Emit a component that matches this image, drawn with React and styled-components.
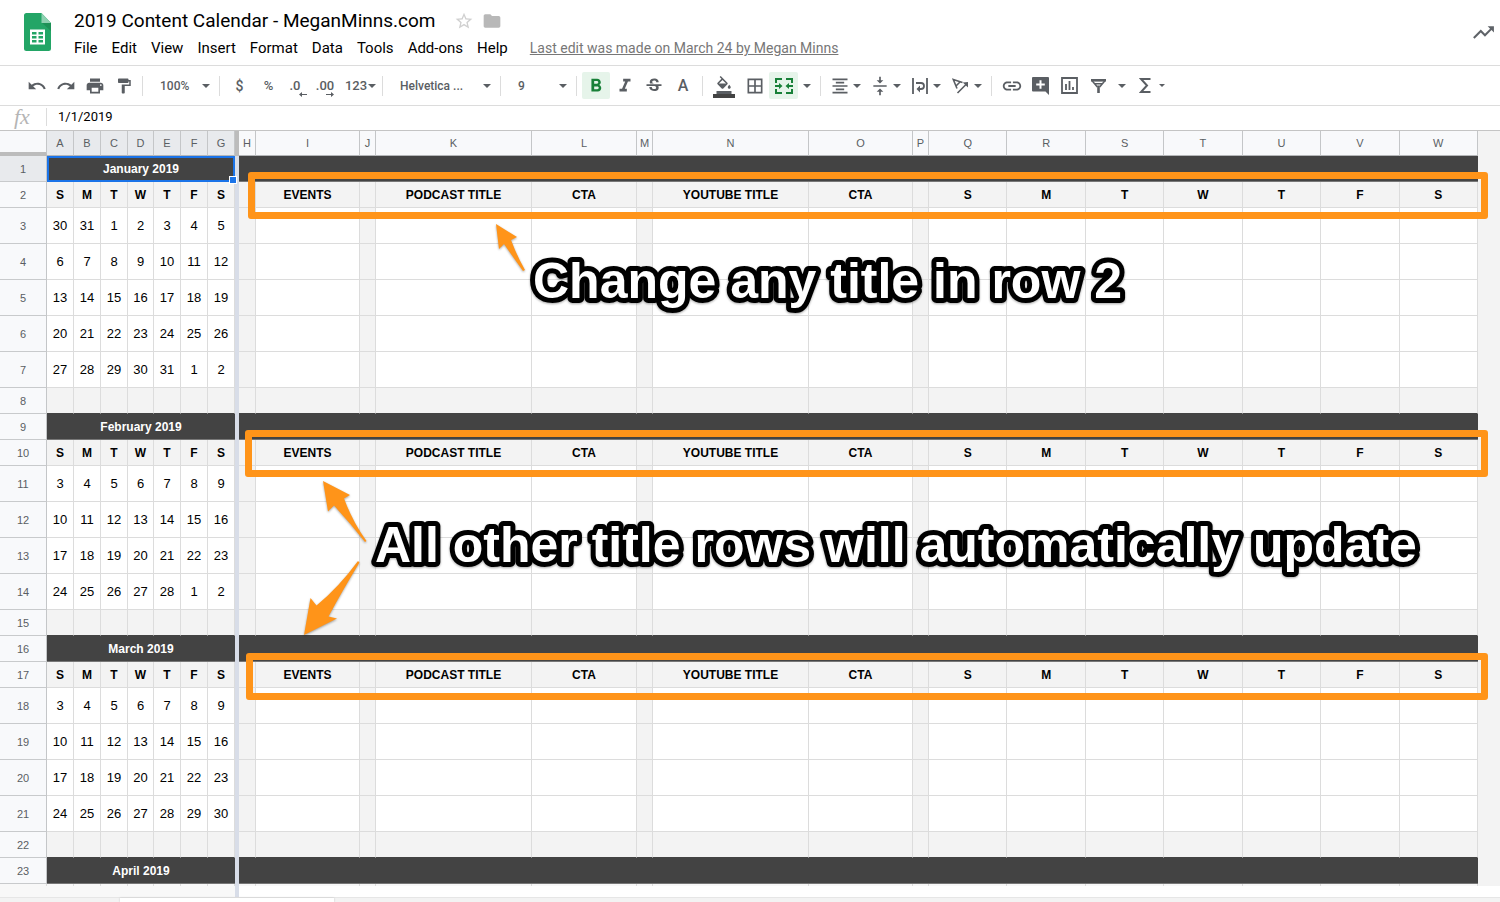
import React from "react";
import styled, { createGlobalStyle, css } from "styled-components";
import {
  MdUndo, MdRedo, MdPrint, MdFormatPaint, MdFormatBold, MdFormatItalic, MdStrikethroughS,
  MdFormatColorFill, MdBorderAll, MdFormatAlignCenter, MdVerticalAlignCenter, MdInsertLink,
  MdTrendingUp, MdFolder, MdStarBorder,
} from "react-icons/md";

const ROBOTO = `Roboto, "Liberation Sans", sans-serif`;
const HELVETICA = `"Liberation Sans", Helvetica, Arial, sans-serif`;
const ORANGE = "#ff9419";
const LINE = "#dcdcdc";
const DARK = "#434343";

const GlobalStyle = createGlobalStyle`
  * { box-sizing: border-box; }
  body { margin: 0; background: #fff; font-family: ${ROBOTO}; color: #000; overflow-x: hidden; }
  button, input, select { font: inherit; color: inherit; border: 0; padding: 0; margin: 0; background: none; }
`;

const Page = styled.div`
  display: flex;
  flex-direction: column;
  height: 100vh;
  overflow: hidden;
`;

const Header = styled.header`
  display: flex;
  flex: none;
  height: 66px;
  border-bottom: 1px solid ${LINE};
`;
const Logo = styled.svg`
  width: 27px;
  height: 38px;
  margin: 13px 23px 0 24px;
  flex: none;
`;
const Heading = styled.div`
  flex: 1;
  padding-top: 8px;
`;
const TitleLine = styled.div`
  display: flex;
  align-items: center;
  height: 26px;
  gap: 8px;
`;
const DocTitle = styled.h1`
  margin: 0 10px 0 0;
  font-size: 19px;
  line-height: 24px;
  font-weight: 400;
`;
const TitleButton = styled.button`
  display: flex;
  color: ${(p) => p.$color};
`;
const MenuBar = styled.nav`
  display: flex;
  align-items: center;
  gap: 14px;
  height: 28px;
  font-size: 15px;
`;
const EditLink = styled.a`
  margin-left: 8px;
  font-size: 14px;
  color: #777;
`;
const Activity = styled.button`
  display: flex;
  align-items: center;
  padding-right: 4px;
  color: #5f6368;
`;

const Toolbar = styled.div`
  display: flex;
  flex: none;
  align-items: center;
  height: 40px;
  padding-left: 22px;
  border-bottom: 1px solid ${LINE};
  color: #5a5e63;
  font-size: 13px;
  font-weight: 500;
`;
const Tool = styled.button`
  display: flex;
  flex: none;
  align-items: center;
  justify-content: center;
  gap: ${(p) => p.$gap || 3}px;
  width: ${(p) => p.$w || 29}px;
  height: 27px;
  border-radius: 2px;
  font-size: ${(p) => p.$size || 13}px;
  ${(p) => p.$active && css`
    background: #e6f4ea;
    color: #188038;
  `}
`;
const Divider = styled.span`
  flex: none;
  width: 1px;
  height: 20px;
  margin: 0 5px 0 4px;
  background: ${LINE};
`;
const Picker = styled.label`
  display: grid;
  flex: none;
  align-items: center;
  width: ${(p) => p.$w}px;
  & > * { grid-area: 1 / 1; }
  & > svg { justify-self: end; margin-right: 5px; pointer-events: none; }
`;
const PickerSelect = styled.select`
  appearance: none;
  width: 100%;
  height: 24px;
  padding-left: 12px;
  font-size: 12px;
`;
const Decimals = styled.span`
  display: flex;
  flex-direction: column;
  align-items: flex-end;
  line-height: 13px;
  padding-top: 5px;
  & > svg { margin-right: ${(p) => (p.$overhang ? -6 : 0)}px; }
`;
const FillSwatch = styled.span`
  display: flex;
  flex-direction: column;
  align-items: center;
  border-bottom: 4px solid ${DARK};
  width: 22px;
  height: 22px;
  margin-top: 3px;
`;

const FormulaBar = styled.label`
  display: flex;
  flex: none;
  align-items: center;
  height: 24px;
  padding-bottom: 2px;
`;
const FormulaMark = styled.span`
  width: 47px;
  padding-left: 14px;
  border-right: 1px solid ${LINE};
  font: italic 22px/18px "Liberation Serif", serif;
  color: #b5b5b5;
`;
const FormulaInput = styled.input`
  flex: 1;
  padding-left: 11px;
  font-size: 13px;
  line-height: 20px;
`;

const Sheet = styled.main`
  position: relative;
  flex: none;
  border-top: 1px solid #c4c4c4;
  background: #f3f3f3;
`;
const Grid = styled.table`
  table-layout: fixed;
  width: calc(100% - 22px);
  border-collapse: separate;
  border-spacing: 0;
  font-family: ${HELVETICA};
  td, th { padding: 0; text-align: center; }
`;
const Col = styled.col`
  width: ${(p) => (p.$w ? `${p.$w}px` : "auto")};
`;
const ColHead = styled.th`
  height: 25px;
  border-right: 1px solid #c4c6c8;
  border-bottom: 1px solid #b4b6b8;
  background: ${(p) => (p.$on ? "#e8eaed" : "#f8f9fb")};
  color: #5a5e63;
  font-size: 11px;
  font-weight: 400;
`;
const Corner = styled.th`
  border-right: 1px solid #c4c6c8;
  border-bottom: 4px solid #bcbcbc;
  background: #f8f9fb;
`;
const FreezeHead = styled.th`
  background: #bcbcbc;
`;
const FreezeCell = styled.td`
  background: #d8dde8;
`;
const RowHead = styled.th`
  height: ${(p) => p.$h}px;
  border-right: 1px solid #c4c6c8;
  border-bottom: 1px solid #c8cacc;
  background: ${(p) => (p.$on ? "#e8eaed" : "#f8f9fb")};
  color: #5a5e63;
  font-size: 11px;
  font-weight: 400;
`;
const Cell = styled.td`
  border-right: 1px solid ${LINE};
  border-bottom: 1px solid ${(p) => (p.$last ? DARK : LINE)};
  background: ${(p) => (p.$grey ? "#f3f3f3" : "#fff")};
  font-size: ${(p) => (p.$bold ? 12 : 13)}px;
  font-weight: ${(p) => (p.$bold ? 700 : 400)};
`;
const MonthCell = styled.td`
  position: relative;
  border-bottom: 1px solid #777;
  background: ${DARK};
  color: #fff;
  font-size: 12px;
  font-weight: 700;
  ${(p) => p.$selected && css`
    border: 2px solid #1a73e8;
  `}
`;
const FillHandle = styled.span`
  position: absolute;
  right: -4px;
  bottom: -4px;
  z-index: 1;
  width: 8px;
  height: 8px;
  border: 1px solid #fff;
  background: #1a73e8;
`;
const StubCell = styled.td`
  height: 2px;
  border-right: 1px solid ${LINE};
  background: #f8f8f8;
`;
const Below = styled.div`
  display: flex;
  flex: none;
  height: 11px;
`;
const BelowFrozen = styled.div`
  width: 239px;
  background: #f8f8f8;
  border-right: 4px solid #d8dde8;
`;
const TabStrip = styled.footer`
  display: flex;
  flex: 1;
  border-top: 1px solid #e6e6e6;
  background: #f3f3f3;
`;
const ActiveTab = styled.div`
  width: 214px;
  margin-left: 120px;
  background: #fff;
  box-shadow: 0 0 2px #bbb;
`;

const Highlight = styled.div`
  position: absolute;
  top: ${(p) => p.$top}px;
  left: ${(p) => p.$left}px;
  right: 12px;
  height: 47px;
  border: 7px solid ${ORANGE};
  border-radius: 3px;
`;
const Annotations = styled.svg`
  position: absolute;
  inset: 0;
  width: 100%;
  height: 100%;
  pointer-events: none;
  filter: drop-shadow(0 1px 1px rgba(0, 0, 0, 0.35));
`;
const Caption = styled.text`
  font: 700 50px ${HELVETICA};
  fill: #fff;
  stroke: #000;
  stroke-width: 10px;
  stroke-linejoin: round;
  paint-order: stroke fill;
`;

const Caret = ({ small }) => (
  <svg width={small ? 6 : 8} height={small ? 3 : 4} viewBox="0 0 8 4" aria-hidden="true">
    <path d="M0 0h8L4 4z" fill="#5a5e63" />
  </svg>
);

const MergeIcon = () => (
  <svg width="18" height="16" viewBox="0 0 18 16" fill="none" stroke="currentColor" strokeWidth="2">
    <path d="M1 5V1h6M11 1h6v4M1 11v4h6M11 15h6v-4M0 8h5M18 8h-5" />
    <path d="M4 5l3.500 3L4 11zM14 5l-3.500 3 3.500 3z" fill="currentColor" stroke="none" />
  </svg>
);
const WrapIcon = () => (
  <svg width="16" height="16" viewBox="0 0 16 16" fill="none" stroke="currentColor" strokeWidth="1.800">
    <path d="M1 0v16M15 0v16M4 5h5a2.800 2.800 0 0 1 0 6H7" />
    <path d="M8 7.500v7L4.500 11z" fill="currentColor" stroke="none" />
  </svg>
);
const RotateIcon = () => (
  <svg width="17" height="16" viewBox="0 0 17 16" fill="none" stroke="currentColor" strokeWidth="1.600">
    <path d="M10.500 4.500L1.300 1.500L5 10.500M8.200 3.800L4 8M5.500 15L14 6.500" />
    <path d="M16 4v5.500L10.800 4.500z" fill="currentColor" stroke="none" />
  </svg>
);
const CommentIcon = () => (
  <svg width="17" height="18" viewBox="0 0 17 18">
    <path d="M1 0h15a1 1 0 0 1 1 1v17l-3.500-3.500H1a1 1 0 0 1-1-1V1a1 1 0 0 1 1-1zM7.500 3.200v3.300H4.200v2h3.300v3.300h2V8.500h3.300v-2H9.500V3.200z" fill="currentColor" fillRule="evenodd" />
  </svg>
);
const ChartIcon = () => (
  <svg width="17" height="17" viewBox="0 0 17 17" fill="none" stroke="currentColor" strokeWidth="1.800">
    <path d="M1 1h15v15H1zM5 7v6M8.500 4v9M12 10v3" />
  </svg>
);
const FilterIcon = () => (
  <svg width="15" height="14" viewBox="0 0 15 14" fill="none" stroke="currentColor">
    <path d="M0 1.300h15" strokeWidth="2.600" />
    <path d="M1.300 2l5 6M13.700 2l-5 6M3.500 4.800h8" strokeWidth="1.500" />
    <path d="M7.500 6.500V14" strokeWidth="2.600" />
  </svg>
);
const SigmaIcon = () => (
  <svg width="12" height="15" viewBox="0 0 12 15" fill="none" stroke="currentColor" strokeWidth="2">
    <path d="M11.500 1H2l6 6.500L2 14h9.500" />
  </svg>
);
const SmallArrow = ({ right }) => (
  <svg width="8" height="5" viewBox="0 0 8 5" fill="currentColor">
    <path d={right ? "M0 2h5V0l3 2.500L5 5V3H0z" : "M8 2H3V0L0 2.500 3 5V3h5z"} />
  </svg>
);

const MENUS = ["File", "Edit", "View", "Insert", "Format", "Data", "Tools", "Add-ons", "Help"];
const WIDTHS = [27, 27, 27, 26, 27, 27, 27, 4, 17, 104, 16, 156, 105, 16, 156, 104, 16];
const FROZEN = "ABCDEFG".split("");
const SCROLLED = "HIJKLMNOPQRSTUVW".split("");
const GREY_COLUMNS = ["H", "J", "M", "P"];
const DAYS = ["S", "M", "T", "W", "T", "F", "S"];
const TITLES = ["", "EVENTS", "", "PODCAST TITLE", "CTA", "", "YOUTUBE TITLE", "CTA", "", ...DAYS];

const range = (a, b) => Array.from({ length: b - a + 1 }, (_, i) => a + i);
const weeks = (days) => {
  const out = [];
  for (let i = 0; i < days.length; i += 7) out.push({ kind: "week", values: days.slice(i, i + 7) });
  return out;
};
const month = (name, days) => [
  { kind: "month", name },
  { kind: "titles", values: DAYS },
  ...weeks(days),
  { kind: "blank", values: Array(7).fill("") },
];
const ROWS = [
  ...month("January 2019", [30, 31, ...range(1, 31), 1, 2]),
  ...month("February 2019", [...range(3, 28), 1, 2]),
  ...month("March 2019", range(3, 30)),
  { kind: "month", name: "April 2019" },
];

function Row({ row, number }) {
  const head = <RowHead scope="row" $h={row.kind === "week" ? 36 : 26} $on={number === 1}>{number}</RowHead>;
  if (row.kind === "month") {
    return (
      <tr>
        {head}
        <MonthCell colSpan={7} $selected={number === 1}>
          {row.name}
          {number === 1 && <FillHandle />}
        </MonthCell>
        <FreezeCell />
        <MonthCell colSpan={16} />
      </tr>
    );
  }
  const titled = row.kind === "titles";
  const blank = row.kind === "blank";
  return (
    <tr>
      {head}
      {row.values.map((v, i) => (
        <Cell key={i} $bold={titled} $grey={titled || blank} $last={blank}>{v}</Cell>
      ))}
      <FreezeCell />
      {SCROLLED.map((c, i) => (
        <Cell key={c} $bold={titled} $grey={titled || blank || GREY_COLUMNS.includes(c)} $last={blank}>
          {titled ? TITLES[i] : ""}
        </Cell>
      ))}
    </tr>
  );
}

const PickerField = ({ label, value, w }) => (
  <Picker $w={w}>
    <PickerSelect aria-label={label} defaultValue={value}>
      <option>{value}</option>
    </PickerSelect>
    <Caret />
  </Picker>
);

export default function App() {
  return (
    <Page>
      <GlobalStyle />
      <Header>
        <Logo viewBox="0 0 27 38" aria-label="Sheets">
          <path d="M2.500 0H17.500L27 10v25.500a2.500 2.500 0 0 1-2.500 2.500h-22A2.500 2.500 0 0 1 0 35.500v-33A2.500 2.500 0 0 1 2.500 0z" fill="#23a566" />
          <path d="M17.500 0L27 10h-9.500z" fill="#8ed1b1" />
          <path d="M18 10h9v8z" fill="#1c9156" />
          <path d="M6 16.500h15v15H6zM8 19v2.500h4.500V19zm6.500 0v2.500H19V19zM8 23v2.500h4.500V23zm6.500 0v2.500H19V23zM8 27v2.500h4.500V27zm6.500 0v2.500H19V27z" fill="#fff" fillRule="evenodd" />
        </Logo>
        <Heading>
          <TitleLine>
            <DocTitle>2019 Content Calendar - MeganMinns.com</DocTitle>
            <TitleButton $color="#d0d0d0" aria-label="Star"><MdStarBorder size={20} /></TitleButton>
            <TitleButton $color="#b8b8b8" aria-label="Move to folder"><MdFolder size={20} /></TitleButton>
          </TitleLine>
          <MenuBar>
            {MENUS.map((m) => <button key={m}>{m}</button>)}
            <EditLink href="#history">Last edit was made on March 24 by Megan Minns</EditLink>
          </MenuBar>
        </Heading>
        <Activity aria-label="Activity"><MdTrendingUp size={25} /></Activity>
      </Header>

      <Toolbar>
        <Tool aria-label="Undo"><MdUndo size={20} /></Tool>
        <Tool aria-label="Redo"><MdRedo size={20} /></Tool>
        <Tool aria-label="Print"><MdPrint size={20} /></Tool>
        <Tool aria-label="Paint format"><MdFormatPaint size={18} /></Tool>
        <Divider />
        <PickerField label="Zoom" value="100%" w={67} />
        <Divider />
        <Tool $size={14}>$</Tool>
        <Tool>%</Tool>
        <Tool $w={24}><Decimals $overhang>.0<SmallArrow /></Decimals></Tool>
        <Tool $w={36}><Decimals>.00<SmallArrow right /></Decimals></Tool>
        <Tool $w={35} $gap={1}>123<Caret /></Tool>
        <Divider />
        <PickerField label="Font" value="Helvetica ..." w={108} />
        <Divider />
        <PickerField label="Font size" value="9" w={66} />
        <Divider />
        <Tool $active $w={28} aria-label="Bold"><MdFormatBold size={22} /></Tool>
        <Tool aria-label="Italic"><MdFormatItalic size={22} /></Tool>
        <Tool aria-label="Strikethrough"><MdStrikethroughS size={20} /></Tool>
        <Tool $w={30} $size={16}>A</Tool>
        <Divider />
        <Tool $w={32} aria-label="Fill color"><FillSwatch><MdFormatColorFill size={20} /></FillSwatch></Tool>
        <Tool aria-label="Borders"><MdBorderAll size={20} /></Tool>
        <Tool $active $w={29} aria-label="Merge cells"><MergeIcon /></Tool>
        <Tool $w={18} aria-label="Merge type"><Caret /></Tool>
        <Divider />
        <Tool $w={39} aria-label="Horizontal align"><MdFormatAlignCenter size={20} /><Caret /></Tool>
        <Tool $w={41} aria-label="Vertical align"><MdVerticalAlignCenter size={20} /><Caret /></Tool>
        <Tool $w={40} $gap={5} aria-label="Text wrapping"><WrapIcon /><Caret /></Tool>
        <Tool $w={41} $gap={5} aria-label="Text rotation"><RotateIcon /><Caret /></Tool>
        <Divider />
        <Tool aria-label="Insert link"><MdInsertLink size={22} /></Tool>
        <Tool aria-label="Insert comment"><CommentIcon /></Tool>
        <Tool aria-label="Insert chart"><ChartIcon /></Tool>
        <Tool aria-label="Filter"><FilterIcon /></Tool>
        <Tool $w={18} aria-label="Filter views"><Caret /></Tool>
        <Tool $w={42} $gap={8} aria-label="Functions"><SigmaIcon /><Caret small /></Tool>
      </Toolbar>

      <FormulaBar>
        <FormulaMark>fx</FormulaMark>
        <FormulaInput defaultValue="1/1/2019" aria-label="Formula" />
      </FormulaBar>

      <Sheet>
        <Grid>
          <colgroup>
            <Col $w={47} />
            {WIDTHS.map((w, i) => <Col key={i} $w={w} />)}
            {DAYS.map((d, i) => <Col key={i} />)}
          </colgroup>
          <thead>
            <tr>
              <Corner />
              {FROZEN.map((c) => <ColHead key={c} scope="col" $on>{c}</ColHead>)}
              <FreezeHead />
              {SCROLLED.map((c) => <ColHead key={c} scope="col">{c}</ColHead>)}
            </tr>
          </thead>
          <tbody>
            {ROWS.map((row, i) => <Row key={i} row={row} number={i + 1} />)}
            <tr>
              <StubCell />
              {FROZEN.map((c) => <StubCell key={c} />)}
              <FreezeCell />
              {SCROLLED.map((c) => <StubCell key={c} />)}
            </tr>
          </tbody>
        </Grid>
        <Highlight $top={41} $left={248} />
        <Highlight $top={299} $left={245} />
        <Highlight $top={522} $left={246} />
        <Annotations>
          <path fill={ORANGE} d="M496 93l21 13-6 3q6 16 14 30l-2 1q-10-14-19-27l-5 5z" />
          <path fill={ORANGE} d="M323 350l27 14-6 3.500q9 24 22.500 42.500l-1.500 1q-14-18-31-36.500l-6 6z" />
          <path fill={ORANGE} d="M304 504l6.500-37 6 7.500q22-18 41.500-44.500l1.500 1.500q-17 28-31 54l8.500 2z" />
          <Caption x="533" y="167">Change any title in row 2</Caption>
          <Caption x="375" y="431">All other title rows will automatically update</Caption>
        </Annotations>
      </Sheet>

      <Below><BelowFrozen /></Below>
      <TabStrip><ActiveTab /></TabStrip>
    </Page>
  );
}
